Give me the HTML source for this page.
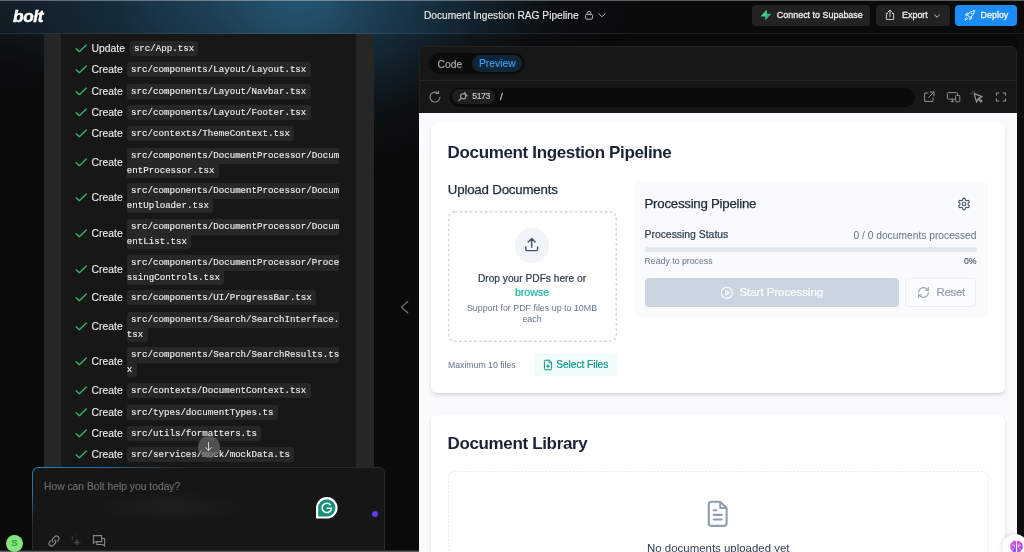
<!DOCTYPE html>
<html><head><meta charset="utf-8">
<style>
*{box-sizing:border-box;margin:0;padding:0}
html,body{width:1024px;height:552px;overflow:hidden;background:#0a0a0a}
body{position:relative;font-family:"Liberation Sans",sans-serif;color:#e5e5e5;-webkit-font-smoothing:antialiased}
.abs{position:absolute}
body>.abs,body>.row{will-change:transform}
#glow{left:0;top:0;width:1024px;height:34px;background:radial-gradient(ellipse 260px 230px at 300px -6px,rgba(40,96,128,.85) 0%,rgba(34,78,106,.55) 35%,rgba(26,58,80,.25) 70%,rgba(10,10,10,0) 100%),radial-gradient(ellipse 460px 190px at 210px -10px,rgba(30,64,86,.75) 0%,rgba(26,52,70,.5) 45%,rgba(18,34,46,.22) 75%,rgba(10,10,10,0) 100%)}
#glow2{left:0;top:34px;width:1024px;height:300px;background:radial-gradient(ellipse 250px 175px at 300px -30px,rgba(40,96,128,.62) 0%,rgba(34,78,106,.4) 35%,rgba(26,58,80,.16) 70%,rgba(10,10,10,0) 100%),radial-gradient(ellipse 440px 120px at 210px -36px,rgba(30,64,86,.5) 0%,rgba(26,52,70,.32) 45%,rgba(18,34,46,.14) 75%,rgba(10,10,10,0) 100%)}
#topline{left:0;top:0;width:1024px;height:1px;background:rgba(255,255,255,.34)}
#hdrline{left:0;top:33px;width:1024px;height:1px;background:rgba(190,225,255,.1)}
#logo{left:13px;top:4.9px;font-weight:bold;font-style:italic;font-size:17.2px;line-height:22px;color:#fff;letter-spacing:-.35px;-webkit-text-stroke:.5px #fff}
#title{left:424px;top:9.2px;font-size:10.2px;-webkit-text-stroke:.15px #e8e8e8;line-height:14px;color:#e8e8e8;white-space:nowrap}
.hbtn{top:5px;height:20.6px;border-radius:4px;background:#222;font-size:8.95px;line-height:21.4px;-webkit-text-stroke:.28px #f0f0f0;color:#f0f0f0;white-space:nowrap}
/* left */
#outer{left:44px;top:34px;width:329.7px;height:440px;background:#262626}
#inner{left:61px;top:34px;width:295px;height:440px;background:#171717}
.row{position:absolute;left:0;width:1024px;height:0}
.chk{position:absolute;left:75px;top:-6.7px;width:12px;height:12px}
.lbl{position:absolute;left:91.6px;top:-7px;font-size:10.35px;-webkit-text-stroke:.12px #ececec;line-height:14px;color:#ececec}
.code{position:absolute;left:127px;font-family:"Liberation Mono",monospace;font-size:9.15px;line-height:14.3px;color:#ececec;-webkit-text-stroke:.15px #ececec;white-space:nowrap}
.code span{background:#272727;padding:2.35px 4.3px;border-radius:3px}
</style></head><body>
<div class="abs" id="glow"></div><div class="abs" id="glow2"></div>
<div class="abs" id="topline"></div>
<div class="abs" id="hdrline"></div>
<div class="abs" id="logo">bolt</div>
<div class="abs" id="title">Document Ingestion RAG Pipeline</div>
<!--HDR-->
<svg class="abs" style="left:583px;top:9px" width="12" height="12" viewBox="0 0 12 12"><rect x="2.6" y="5.4" width="6.8" height="4.8" rx="1" fill="none" stroke="#d0d0d0" stroke-width=".9"/><path d="M4.2 5.4 V4.2 a1.8 1.8 0 0 1 3.6 0 V5.4" fill="none" stroke="#d0d0d0" stroke-width=".9"/></svg>
<svg class="abs" style="left:597px;top:10px" width="10" height="10" viewBox="0 0 10 10"><path d="M2 3.8 L5 6.8 L8 3.8" fill="none" stroke="#d0d0d0" stroke-width=".9" stroke-linecap="round" stroke-linejoin="round"/></svg>
<div class="abs hbtn" style="left:752px;width:118px"><svg class="abs" style="left:7.9px;top:3.9px" width="12" height="12" viewBox="0 0 12 12"><path d="M5.2 11.6 L11.5 4.7 H5.2 Z" fill="#2fb97f"/><path d="M6.8 .4 L.5 7.4 H6.8 Z" fill="#3ecf8e"/></svg><span class="abs" style="left:24.8px;top:0">Connect to Supabase</span></div>
<div class="abs hbtn" style="left:876px;width:74px"><svg class="abs" style="left:8px;top:4px" width="12" height="12" viewBox="0 0 12 12"><path d="M3.6 4.4 H2.4 V10.4 H9.6 V4.4 H8.4 M6 7.6 V1.4 M3.9 3.3 L6 1.2 L8.1 3.3" fill="none" stroke="#e8e8e8" stroke-width=".9" stroke-linecap="round" stroke-linejoin="round"/></svg><span class="abs" style="left:26px;top:0">Export</span><svg class="abs" style="left:55.8px;top:5.6px" width="10" height="10" viewBox="0 0 10 10"><path d="M2.6 3.9 L5 6.2 L7.4 3.9" fill="none" stroke="#d0d0d0" stroke-width=".9" stroke-linecap="round" stroke-linejoin="round"/></svg></div>
<div class="abs hbtn" style="left:955px;width:62px;background:#1a8cf5;color:#fff"><svg class="abs" style="left:8px;top:4px" width="13" height="13" viewBox="0 0 13 13"><path d="M11.3 1.7 C8.2 1.7 5.8 3.4 4.6 6.2 L6.8 8.4 C9.6 7.2 11.3 4.8 11.3 1.7 Z M4.6 6.2 L2.2 6 L3.8 4.2 L5.6 4.4 M6.8 8.4 L7 10.8 L8.8 9.2 L8.6 7.4 M3.6 8.2 C2.6 8.6 2.2 9.8 2 11 C3.2 10.8 4.4 10.4 4.8 9.4" fill="none" stroke="#fff" stroke-width=".9" stroke-linecap="round" stroke-linejoin="round"/><circle cx="8.6" cy="4.4" r=".8" fill="#fff"/></svg><span class="abs" style="left:25.5px;top:0">Deploy</span></div>
<!--/HDR-->
<div class="abs" id="outer"></div>
<div class="abs" id="inner"></div>
<!--ROWS-->
<div class="row" style="top:48.70px"><svg class="chk" viewBox="0 0 12 12"><path d="M1.2 6.7 L4.4 9.7 L11.3 3" fill="none" stroke="#2fbf63" stroke-width="1.25" stroke-linecap="round" stroke-linejoin="round"/></svg><div class="lbl">Update</div><div class="code" style="left:129.6px;top:-7.15px"><span>src/App.tsx</span></div></div>
<div class="row" style="top:70.10px"><svg class="chk" viewBox="0 0 12 12"><path d="M1.2 6.7 L4.4 9.7 L11.3 3" fill="none" stroke="#2fbf63" stroke-width="1.25" stroke-linecap="round" stroke-linejoin="round"/></svg><div class="lbl">Create</div><div class="code" style="left:126.8px;top:-7.15px"><span>src/components/Layout/Layout.tsx</span></div></div>
<div class="row" style="top:91.50px"><svg class="chk" viewBox="0 0 12 12"><path d="M1.2 6.7 L4.4 9.7 L11.3 3" fill="none" stroke="#2fbf63" stroke-width="1.25" stroke-linecap="round" stroke-linejoin="round"/></svg><div class="lbl">Create</div><div class="code" style="left:126.8px;top:-7.15px"><span>src/components/Layout/Navbar.tsx</span></div></div>
<div class="row" style="top:112.90px"><svg class="chk" viewBox="0 0 12 12"><path d="M1.2 6.7 L4.4 9.7 L11.3 3" fill="none" stroke="#2fbf63" stroke-width="1.25" stroke-linecap="round" stroke-linejoin="round"/></svg><div class="lbl">Create</div><div class="code" style="left:126.8px;top:-7.15px"><span>src/components/Layout/Footer.tsx</span></div></div>
<div class="row" style="top:134.30px"><svg class="chk" viewBox="0 0 12 12"><path d="M1.2 6.7 L4.4 9.7 L11.3 3" fill="none" stroke="#2fbf63" stroke-width="1.25" stroke-linecap="round" stroke-linejoin="round"/></svg><div class="lbl">Create</div><div class="code" style="left:126.8px;top:-7.15px"><span>src/contexts/ThemeContext.tsx</span></div></div>
<div class="row" style="top:162.54px"><svg class="chk" viewBox="0 0 12 12"><path d="M1.2 6.7 L4.4 9.7 L11.3 3" fill="none" stroke="#2fbf63" stroke-width="1.25" stroke-linecap="round" stroke-linejoin="round"/></svg><div class="lbl">Create</div><div class="code" style="left:126.8px;top:-13.25px"><span>src/components/DocumentProcessor/Docum<br>entProcessor.tsx</span></div></div>
<div class="row" style="top:198.21px"><svg class="chk" viewBox="0 0 12 12"><path d="M1.2 6.7 L4.4 9.7 L11.3 3" fill="none" stroke="#2fbf63" stroke-width="1.25" stroke-linecap="round" stroke-linejoin="round"/></svg><div class="lbl">Create</div><div class="code" style="left:126.8px;top:-13.25px"><span>src/components/DocumentProcessor/Docum<br>entUploader.tsx</span></div></div>
<div class="row" style="top:233.88px"><svg class="chk" viewBox="0 0 12 12"><path d="M1.2 6.7 L4.4 9.7 L11.3 3" fill="none" stroke="#2fbf63" stroke-width="1.25" stroke-linecap="round" stroke-linejoin="round"/></svg><div class="lbl">Create</div><div class="code" style="left:126.8px;top:-13.25px"><span>src/components/DocumentProcessor/Docum<br>entList.tsx</span></div></div>
<div class="row" style="top:269.55px"><svg class="chk" viewBox="0 0 12 12"><path d="M1.2 6.7 L4.4 9.7 L11.3 3" fill="none" stroke="#2fbf63" stroke-width="1.25" stroke-linecap="round" stroke-linejoin="round"/></svg><div class="lbl">Create</div><div class="code" style="left:126.8px;top:-13.25px"><span>src/components/DocumentProcessor/Proce<br>ssingControls.tsx</span></div></div>
<div class="row" style="top:298.38px"><svg class="chk" viewBox="0 0 12 12"><path d="M1.2 6.7 L4.4 9.7 L11.3 3" fill="none" stroke="#2fbf63" stroke-width="1.25" stroke-linecap="round" stroke-linejoin="round"/></svg><div class="lbl">Create</div><div class="code" style="left:126.8px;top:-7.15px"><span>src/components/UI/ProgressBar.tsx</span></div></div>
<div class="row" style="top:326.61px"><svg class="chk" viewBox="0 0 12 12"><path d="M1.2 6.7 L4.4 9.7 L11.3 3" fill="none" stroke="#2fbf63" stroke-width="1.25" stroke-linecap="round" stroke-linejoin="round"/></svg><div class="lbl">Create</div><div class="code" style="left:126.8px;top:-13.25px"><span>src/components/Search/SearchInterface.<br>tsx</span></div></div>
<div class="row" style="top:362.28px"><svg class="chk" viewBox="0 0 12 12"><path d="M1.2 6.7 L4.4 9.7 L11.3 3" fill="none" stroke="#2fbf63" stroke-width="1.25" stroke-linecap="round" stroke-linejoin="round"/></svg><div class="lbl">Create</div><div class="code" style="left:126.8px;top:-13.25px"><span>src/components/Search/SearchResults.ts<br>x</span></div></div>
<div class="row" style="top:391.12px"><svg class="chk" viewBox="0 0 12 12"><path d="M1.2 6.7 L4.4 9.7 L11.3 3" fill="none" stroke="#2fbf63" stroke-width="1.25" stroke-linecap="round" stroke-linejoin="round"/></svg><div class="lbl">Create</div><div class="code" style="left:126.8px;top:-7.15px"><span>src/contexts/DocumentContext.tsx</span></div></div>
<div class="row" style="top:412.52px"><svg class="chk" viewBox="0 0 12 12"><path d="M1.2 6.7 L4.4 9.7 L11.3 3" fill="none" stroke="#2fbf63" stroke-width="1.25" stroke-linecap="round" stroke-linejoin="round"/></svg><div class="lbl">Create</div><div class="code" style="left:126.8px;top:-7.15px"><span>src/types/documentTypes.ts</span></div></div>
<div class="row" style="top:433.92px"><svg class="chk" viewBox="0 0 12 12"><path d="M1.2 6.7 L4.4 9.7 L11.3 3" fill="none" stroke="#2fbf63" stroke-width="1.25" stroke-linecap="round" stroke-linejoin="round"/></svg><div class="lbl">Create</div><div class="code" style="left:126.8px;top:-7.15px"><span>src/utils/formatters.ts</span></div></div>
<div class="row" style="top:455.32px"><svg class="chk" viewBox="0 0 12 12"><path d="M1.2 6.7 L4.4 9.7 L11.3 3" fill="none" stroke="#2fbf63" stroke-width="1.25" stroke-linecap="round" stroke-linejoin="round"/></svg><div class="lbl">Create</div><div class="code" style="left:126.8px;top:-7.15px"><span>src/services/mock/mockData.ts</span></div></div>
<!--/ROWS-->
<!--CHAT-->
<div class="abs" style="left:197.8px;top:435.8px;width:21.6px;height:21.6px;border-radius:50%;background:rgba(98,98,98,.74)"><svg class="abs" style="left:5.3px;top:5.3px" width="11" height="11" viewBox="0 0 11 11"><path d="M5.5 1.5 V9.3 M2.6 6.5 L5.5 9.4 L8.4 6.5" fill="none" stroke="#e8e8e8" stroke-width=".9" stroke-linecap="round" stroke-linejoin="round"/></svg></div>
<div class="abs" id="chat" style="left:32px;top:466.5px;width:353px;height:95px;background:#161616;border:1px solid #2a2a2a;border-radius:6px 6px 0 0"></div>
<div class="abs" style="left:32px;top:466.5px;width:150px;height:60px;border-radius:6px 0 0 0;border-top:1.4px solid #2a7fb8;border-left:1.4px solid #2a7fb8;-webkit-mask-image:radial-gradient(ellipse 150px 60px at 0 0,#000 0%,rgba(0,0,0,.8) 45%,transparent 100%)"></div>
<div class="abs" style="left:44px;top:479.5px;font-size:10.3px;line-height:14px;color:#6c6c6c;-webkit-text-stroke:.18px #6c6c6c;white-space:nowrap">How can Bolt help you today?</div>
<div class="abs" style="left:90px;top:490px;width:160px;height:34px;background:radial-gradient(ellipse at center,rgba(40,40,40,.55),rgba(18,18,18,0) 70%)"></div>
<svg class="abs" style="left:315.8px;top:497.2px" width="21.6" height="21.6" viewBox="0 0 21.6 21.6"><path d="M10.8 0 A10.8 10.8 0 1 1 10.8 21.6 H1.2 Q0 21.6 0 20.4 V10.8 A10.8 10.8 0 0 1 10.8 0Z" fill="#fff"/><path d="M10.8 2.2 A8.6 8.6 0 1 1 10.8 19.4 H2.9 Q2.2 19.4 2.2 18.7 V10.8 A8.6 8.6 0 0 1 10.8 2.2Z" fill="#15907a"/><path d="M14.3 7.7 A4.7 4.7 0 1 0 15.5 11.3 H11.2" fill="none" stroke="#fff" stroke-width="1.45" stroke-linecap="round"/></svg>
<div class="abs" style="left:371.6px;top:511.3px;width:6.2px;height:6.2px;border-radius:50%;background:#6038f5"></div>
<svg class="abs" style="left:47px;top:534px" width="14" height="14" viewBox="0 0 14 14"><g fill="none" stroke="#8a8a8a" stroke-width="1.15" stroke-linecap="round"><path d="M6 8 a2.6 2.6 0 0 1 0 -3.6 l2 -2 a2.6 2.6 0 0 1 3.6 3.6 l-1 1"/><path d="M8 6 a2.6 2.6 0 0 1 0 3.6 l-2 2 a2.6 2.6 0 0 1 -3.6 -3.6 l1 -1"/></g></svg>
<svg class="abs" style="left:69px;top:534px" width="14" height="14" viewBox="0 0 14 14"><path d="M8 4 L9 7.4 L12.4 8.4 L9 9.4 L8 12.8 L7 9.4 L3.6 8.4 L7 7.4 Z" fill="#444"/><path d="M3.6 1.6 L4.2 3.4 L6 4 L4.2 4.6 L3.6 6.4 L3 4.6 L1.2 4 L3 3.4 Z" fill="#3a3a3a"/><circle cx="7.4" cy="2" r=".7" fill="#3a3a3a"/></svg>
<svg class="abs" style="left:92px;top:534px" width="14" height="14" viewBox="0 0 14 14"><g fill="none" stroke="#8a8a8a" stroke-width="1.05" stroke-linejoin="round"><path d="M1.4 1.6 H9.6 V7.6 H3.6 L1.4 9.4 Z"/><path d="M9.6 4.4 H12.6 V12.2 L10.6 10.4 H4.8 V7.8"/></g></svg>
<div class="abs" style="left:0;top:550px;width:419px;height:2px;background:linear-gradient(#262626 0,#262626 50%,#5e5e5e 50%,#5e5e5e 100%)"></div>
<div class="abs" style="left:6.2px;top:535.2px;width:16.8px;height:16.8px;border-radius:50%;background:#84e57e;color:#2a9a3c;font-weight:bold;font-size:9.5px;line-height:16.8px;text-align:center">S</div>
<svg class="abs" style="left:398px;top:300px" width="12" height="14" viewBox="0 0 12 14"><path d="M9.7 1.5 L3.5 7.1 L9.7 12.8" fill="none" stroke="#747474" stroke-width="1.25" stroke-linecap="round" stroke-linejoin="round"/></svg>
<!--/CHAT-->
<!--PREVIEW-->
<style>
#pv{left:419px;top:46px;width:598px;height:520px;background:#171717;border-radius:6px 6px 0 0;border:1px solid #222;border-bottom:0}
#pvline{left:419px;top:80px;width:598px;height:1px;background:#262626}
#tabs{left:429.4px;top:52.8px;width:95.6px;height:21.4px;border-radius:10.7px;background:#0b0b0b}
#tabs .c{position:absolute;left:8.6px;top:.6px;font-size:10.3px;line-height:22.4px;color:#b0b0b0;-webkit-text-stroke:.15px #b0b0b0}
#tabs .p{position:absolute;left:43.2px;top:2.2px;width:50.2px;height:16.8px;border-radius:8.4px;background:#0f2638;color:#3f9ff5;font-size:10.3px;line-height:17.6px;text-align:center;-webkit-text-stroke:.15px #3f9ff5}
#url{left:449.5px;top:87.5px;width:465px;height:19px;border-radius:9.5px;background:#0a0a0a}
#port{left:452px;top:89.3px;width:43px;height:15.4px;border-radius:7.7px;background:#1f1f1f;font-size:8.6px;line-height:15.4px;color:#c8c8c8}
#frame{left:419px;top:112.5px;width:597.5px;height:440px;background:#f8fafc;overflow:hidden}
.card{position:absolute;background:#fff;border-radius:6px;box-shadow:0 2.6px 4.6px -.6px rgba(15,23,42,.1),0 1.3px 2.6px -1px rgba(15,23,42,.09)}
.h2{position:absolute;font-weight:bold;font-size:17px;line-height:22px;color:#1a2234;white-space:nowrap;letter-spacing:-.35px}
.t{position:absolute;white-space:nowrap}
</style>
<div class="abs" id="pv"></div>
<div class="abs" id="pvline"></div>
<div class="abs" id="tabs"><span class="c">Code</span><span class="p">Preview</span></div>
<svg class="abs" style="left:428px;top:90px" width="14" height="14" viewBox="0 0 14 14"><path d="M12 7 A5 5 0 1 1 10.2 3.2" fill="none" stroke="#929292" stroke-width="1.05" stroke-linecap="round"/><path d="M10.4 .9 V3.5 H7.8" fill="none" stroke="#929292" stroke-width="1.05" stroke-linecap="round" stroke-linejoin="round"/></svg>
<div class="abs" id="url"></div>
<div class="abs" id="port"><svg class="abs" style="left:4.6px;top:2px" width="11.6" height="11.6" viewBox="0 0 10 10"><circle cx="5.4" cy="4.6" r="2.3" fill="none" stroke="#aaa" stroke-width=".9"/><path d="M3.6 6.4 L1.6 8.4 M6.4 1.2 L7.4 2.2 M7.8 3.2 L8.8 4.2" stroke="#aaa" stroke-width=".9" stroke-linecap="round"/></svg><span class="abs" style="left:20.3px;top:0;letter-spacing:-.4px;-webkit-text-stroke:.2px #c8c8c8">5173</span></div>
<div class="abs" style="left:500.4px;top:90px;font-size:9.8px;line-height:14px;color:#c8c8c8;-webkit-text-stroke:.25px #c8c8c8">/</div>
<svg class="abs" style="left:921.8px;top:90px" width="14" height="14" viewBox="0 0 14 14"><path d="M6 3 H2.6 V11.4 H11 V8 M8.2 2 H12 V5.8 M12 2 L6.6 7.4" fill="none" stroke="#929292" stroke-width="1" stroke-linecap="round" stroke-linejoin="round"/></svg>
<svg class="abs" style="left:946px;top:90px" width="15" height="14" viewBox="0 0 15 14"><path d="M9 9.2 H2.4 a1 1 0 0 1 -1 -1 V3.6 a1 1 0 0 1 1 -1 H10.6 a1 1 0 0 1 1 1 V4.6 M5 11.6 H7.6 M6.4 9.2 V11.6" fill="none" stroke="#929292" stroke-width="1" stroke-linecap="round" stroke-linejoin="round"/><rect x="9.6" y="5.4" width="4.2" height="6.4" rx=".9" fill="#171717" stroke="#929292" stroke-width="1"/></svg>
<svg class="abs" style="left:970px;top:90px" width="14" height="14" viewBox="0 0 14 14"><path d="M4.2 3.6 L12.2 6.6 L8.8 8 L12 11.2 L11 12.2 L7.8 9 L6.6 12.4 Z" fill="none" stroke="#929292" stroke-width="1.2" stroke-linejoin="round"/><path d="M2.2 1.4 L3 2.6 M.8 3.6 L2.2 4 M4.6 .8 L4.8 2.2" stroke="#6a6a6a" stroke-width=".8" stroke-linecap="round"/></svg>
<svg class="abs" style="left:994px;top:90px" width="14" height="14" viewBox="0 0 14 14"><path d="M2.5 5.2 V3 H4.9 M9.1 3 H11.5 V5.2 M11.5 8.8 V11 H9.1 M4.9 11 H2.5 V8.8" fill="none" stroke="#929292" stroke-width="1.05" stroke-linecap="round" stroke-linejoin="round"/></svg>
<div class="abs" id="frame">
<!--FRAME-->
<div class="card" style="left:12px;top:9.5px;width:574px;height:270px"></div>
<div class="card" style="left:12px;top:301.7px;width:574px;height:200px"></div>
<div class="h2" style="left:28.6px;top:28.5px">Document Ingestion Pipeline</div>
<div class="t" style="left:28.8px;top:68.4px;font-size:13.3px;line-height:18px;color:#1e293b;letter-spacing:-.2px;-webkit-text-stroke:.25px #1e293b">Upload Documents</div>
<svg class="abs" style="left:28.5px;top:97.9px" width="169" height="131"><rect x=".75" y=".75" width="167.5" height="129.5" rx="6" fill="#fff" stroke="#cdd6e2" stroke-width="1.4" stroke-dasharray="2.6 2.4"/></svg>
<div class="abs" style="left:95.7px;top:115.4px;width:34.2px;height:34.2px;border-radius:50%;background:#f1f5f9"><svg class="abs" style="left:8.4px;top:8px" width="17.4" height="17.4" viewBox="0 0 15 15"><path d="M2.4 9.4 V11.4 a1.2 1.2 0 0 0 1.2 1.2 H11.4 a1.2 1.2 0 0 0 1.2 -1.2 V9.4 M7.5 9.6 V2.4 M4.5 5.2 L7.5 2.2 L10.5 5.2" fill="none" stroke="#475569" stroke-width="1.25" stroke-linecap="round" stroke-linejoin="round"/></svg></div>
<div class="t" style="left:28.5px;width:169px;top:159px;text-align:center;font-size:10.2px;line-height:14px;color:#334155;-webkit-text-stroke:.22px #334155">Drop your PDFs here or</div>
<div class="t" style="left:28.5px;width:169px;top:172.4px;text-align:center;font-size:10.6px;line-height:14px;color:#14b8a6;-webkit-text-stroke:.2px #14b8a6">browse</div>
<div class="t" style="left:28.5px;width:169px;top:188.8px;text-align:center;font-size:8.88px;line-height:12px;color:#64748b">Support for PDF files up to 10MB</div>
<div class="t" style="left:28.5px;width:169px;top:200px;text-align:center;font-size:8.88px;line-height:12px;color:#64748b">each</div>
<div class="t" style="left:29px;top:246px;font-size:8.7px;line-height:12px;color:#64748b">Maximum 10 files</div>
<div class="abs" style="left:115px;top:241.3px;width:82.5px;height:22px;border-radius:4px;background:#effcf9"><svg class="abs" style="left:7.5px;top:5px" width="12" height="12" viewBox="0 0 12 12"><path d="M7 1.2 H3.4 a1 1 0 0 0 -1 1 V9.8 a1 1 0 0 0 1 1 H8.6 a1 1 0 0 0 1 -1 V3.8 Z M7 1.2 V3.8 H9.6 M6 5.6 V8.6 M4.5 7.1 H7.5" fill="none" stroke="#0d9488" stroke-width="1" stroke-linecap="round" stroke-linejoin="round"/></svg><span class="t" style="left:22.3px;top:0;font-size:10.05px;line-height:22px;color:#0d9488;-webkit-text-stroke:.2px #0d9488">Select Files</span></div>
<!-- processing card -->
<div class="abs" style="left:214.7px;top:68px;width:354.3px;height:136.2px;border-radius:6px;background:#f8fafc"></div>
<div class="t" style="left:225.5px;top:82px;font-size:13.3px;line-height:18px;color:#1e293b;letter-spacing:-.27px;-webkit-text-stroke:.25px #1e293b">Processing Pipeline</div>
<svg class="abs" style="left:538.4px;top:84px" width="14" height="14" viewBox="0 0 24 24"><path d="M12.22 2h-.44a2 2 0 0 0-2 2v.18a2 2 0 0 1-1 1.73l-.43.25a2 2 0 0 1-2 0l-.15-.08a2 2 0 0 0-2.73.73l-.22.38a2 2 0 0 0 .73 2.73l.15.1a2 2 0 0 1 1 1.72v.51a2 2 0 0 1-1 1.74l-.15.09a2 2 0 0 0-.73 2.73l.22.38a2 2 0 0 0 2.73.73l.15-.08a2 2 0 0 1 2 0l.43.25a2 2 0 0 1 1 1.73V20a2 2 0 0 0 2 2h.44a2 2 0 0 0 2-2v-.18a2 2 0 0 1 1-1.73l.43-.25a2 2 0 0 1 2 0l.15.08a2 2 0 0 0 2.73-.73l.22-.39a2 2 0 0 0-.73-2.73l-.15-.08a2 2 0 0 1-1-1.74v-.5a2 2 0 0 1 1-1.74l.15-.09a2 2 0 0 0 .73-2.73l-.22-.38a2 2 0 0 0-2.73-.73l-.15.08a2 2 0 0 1-2 0l-.43-.25a2 2 0 0 1-1-1.73V4a2 2 0 0 0-2-2z" fill="none" stroke="#475569" stroke-width="2"/><circle cx="12" cy="12" r="3" fill="none" stroke="#475569" stroke-width="2"/></svg>
<div class="t" style="left:225.5px;top:114.6px;font-size:10.4px;line-height:14px;color:#334155;-webkit-text-stroke:.22px #334155">Processing Status</div>
<div class="t" style="right:40px;top:115.5px;font-size:10.25px;line-height:14px;color:#64748b">0 / 0 documents processed</div>
<div class="abs" style="left:225.5px;top:134.2px;width:332px;height:5px;border-radius:2.5px;background:#e2e8f0"></div>
<div class="t" style="left:225.5px;top:142px;font-size:8.75px;line-height:12px;color:#64748b">Ready to process</div>
<div class="t" style="right:40px;top:142.2px;font-size:8.7px;line-height:12px;color:#3f4c60;-webkit-text-stroke:.1px #3f4c60">0%</div>
<div class="abs" style="left:225.5px;top:165.4px;width:254.7px;height:29px;border-radius:4px;background:#cbd5e1"><svg class="abs" style="left:75.3px;top:7.7px" width="13.6" height="13.6" viewBox="0 0 12 12"><circle cx="6" cy="6" r="4.9" fill="none" stroke="#fff" stroke-width="1.05"/><path d="M5 4.1 L8 6 L5 7.9 Z" fill="none" stroke="#fff" stroke-width=".95" stroke-linejoin="round"/></svg><span class="t" style="left:95px;top:0;font-size:11.4px;line-height:29px;color:#fff;-webkit-text-stroke:.2px #fff">Start Processing</span></div>
<div class="abs" style="left:486.3px;top:165.4px;width:71.2px;height:29px;border-radius:4px;background:#fbfcfd;border:1px solid #ebeff4"><svg class="abs" style="left:11px;top:7px" width="13" height="13" viewBox="0 0 24 24"><path d="M3 12a9 9 0 0 1 9-9 9.75 9.75 0 0 1 6.74 2.74L21 8M21 3v5h-5M21 12a9 9 0 0 1-9 9 9.75 9.75 0 0 1-6.74-2.74L3 16M8 16H3v5" fill="none" stroke="#94a3b8" stroke-width="2" stroke-linecap="round" stroke-linejoin="round"/></svg><span class="t" style="left:30.2px;top:-1px;font-size:11.4px;line-height:29px;color:#939fb0;letter-spacing:-.25px;-webkit-text-stroke:.2px #939fb0">Reset</span></div>
<!-- library -->
<div class="h2" style="left:28.5px;top:320.2px">Document Library</div>
<svg class="abs" style="left:28.5px;top:358.2px" width="541.5" height="100"><rect x=".6" y=".6" width="539.3" height="120" rx="5" fill="#fff" stroke="#e6eaf1" stroke-width="1.1" stroke-dasharray="1.7 1.7"/></svg>
<svg class="abs" style="left:287.3px;top:387px" width="23.4" height="27.6" viewBox="0 0 22 26"><path d="M13.4 1.6 H5 a2.4 2.4 0 0 0 -2.4 2.4 V22 a2.4 2.4 0 0 0 2.4 2.4 H17 a2.4 2.4 0 0 0 2.4 -2.4 V7.6 Z M13.4 1.6 V7.6 H19.4 M7.2 9.6 H9.6 M7.2 14 H14.8 M7.2 18.4 H14.8" fill="none" stroke="#8f9db2" stroke-width="1.95" stroke-linecap="round" stroke-linejoin="round"/></svg>
<div class="t" style="left:28.5px;width:541.5px;top:428.3px;text-align:center;font-size:11.45px;line-height:14px;color:#334155">No documents uploaded yet</div>
<!--/FRAME-->
</div>
<div class="abs" style="left:1017px;top:35px;width:7px;height:517px;background:#0d0d0d"></div>
<div class="abs" style="left:1001.5px;top:533.5px;width:26px;height:26px;border-radius:50%;background:#fff;box-shadow:0 0 4px rgba(0,0,0,.18)"><svg class="abs" style="left:6.5px;top:6px" width="15" height="14" viewBox="0 0 15 14"><defs><linearGradient id="bg1" x1="0" y1="0" x2="1" y2="1"><stop offset="0" stop-color="#ff5fa2"/><stop offset=".5" stop-color="#c04df0"/><stop offset="1" stop-color="#5b5bff"/></linearGradient></defs><path d="M7 1.2 C5.6 .2 3.6 .8 3.2 2.4 C1.6 2.8 .8 4.6 1.6 6 C.6 7.4 1.2 9.4 2.8 10 C3.2 11.8 5.4 12.8 7 11.6 Z" fill="url(#bg1)"/><path d="M8 1.2 C9.4 .2 11.4 .8 11.8 2.4 C13.4 2.8 14.2 4.6 13.4 6 C14.4 7.4 13.8 9.4 12.2 10 C11.8 11.8 9.6 12.8 8 11.6 Z" fill="url(#bg1)"/><path d="M3 5 H5.4 V8 M12 5 H9.6 V8 M4 10 V8.4 M11 10 V8.4" fill="none" stroke="#fff" stroke-width=".7" opacity=".8"/></svg></div>
<!--/PREVIEW-->
</body></html>
